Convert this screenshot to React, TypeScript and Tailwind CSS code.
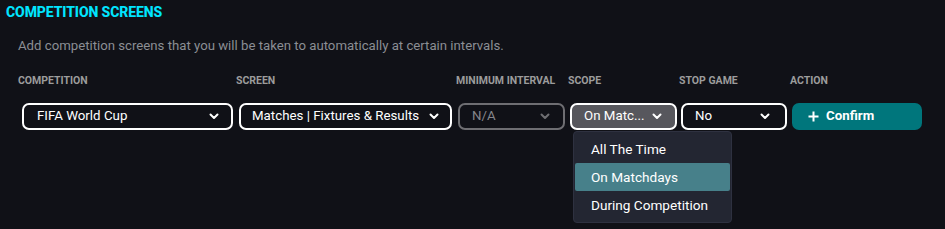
import React from "react";

const Chevron = ({ color = "#ffffff" }: { color?: string }) => (
  <svg width="10" height="7" viewBox="0 0 10 7" fill="none">
    <path d="M1.5 1.5 L5 5 L8.5 1.5" stroke={color} strokeWidth="2" strokeLinecap="round" strokeLinejoin="round" />
  </svg>
);

export default function App() {
  return (
    <div
      className="w-[945px] h-[229px] bg-[#101117] text-white relative overflow-hidden"
      style={{ fontFamily: "Roboto, 'Liberation Sans', sans-serif" }}
    >
      <div className="pt-[5px] pl-[6px]">
        <h1 className="text-[14px] leading-[14px] font-extrabold text-[#00e5ff] tracking-[-0.1px]">COMPETITION SCREENS</h1>
      </div>
      <p className="mt-[19px] pl-[18px] text-[13.2px] leading-[16px] text-[#8b8e94]">
        Add competition screens that you will be taken to automatically at certain intervals.
      </p>

      <div className="mt-[21px] flex pl-[18px] text-[10.5px] leading-[12px] font-bold text-[#9c9c9c]">
        <div className="w-[218px]">COMPETITION</div>
        <div className="w-[220px]">SCREEN</div>
        <div className="w-[112px] whitespace-nowrap">MINIMUM INTERVAL</div>
        <div className="w-[111px]">SCOPE</div>
        <div className="w-[111px]">STOP GAME</div>
        <div>ACTION</div>
      </div>

      <div className="mt-[16px] flex pl-[22px] text-[13.3px]">
        <div className="w-[211px] h-[27px] border-2 border-white rounded-[7px] flex items-center justify-between pl-[13px] pr-[12px]">
          <span className="-mt-px">FIFA World Cup</span>
          <Chevron />
        </div>
        <div className="ml-[6px] w-[213px] h-[27px] border-2 border-white rounded-[7px] flex items-center justify-between pl-[11px] pr-[11px]">
          <span className="-mt-px whitespace-nowrap">Matches | Fixtures &amp; Results</span>
          <Chevron />
        </div>
        <div className="ml-[6px] w-[107px] h-[27px] border-2 border-[#6e6e72] rounded-[7px] flex items-center justify-between pl-[12px] pr-[13px] text-[#85868c]">
          <span className="-mt-px">N/A</span>
          <Chevron color="#6e6e72" />
        </div>
        <div className="relative ml-[5px] w-[107px] h-[27px] border-2 border-white bg-[#57575d] rounded-[7px] flex items-center pl-[12px]">
          <span className="-mt-px">On Matc...</span>
          <span className="ml-[8px] flex"><Chevron /></span>
          <div className="absolute left-[1px] top-[26px] w-[159px] bg-[#232632] border border-[#2e3140] rounded-[4px] py-[3px] px-px text-[13.6px] z-10">
            <div className="h-[28px] flex items-center pl-[16px]">All The Time</div>
            <div className="h-[28px] flex items-center pl-[16px] bg-[#47808a] rounded-[2px]">On Matchdays</div>
            <div className="h-[28px] flex items-center pl-[16px]">During Competition</div>
          </div>
        </div>
        <div className="ml-[4px] w-[106px] h-[27px] border-2 border-white rounded-[7px] flex items-center justify-between pl-[12px] pr-[15px]">
          <span className="-mt-px">No</span>
          <Chevron />
        </div>
        <button className="ml-[5px] w-[130px] h-[27px] bg-[#00767c] rounded-[7px] flex items-center pl-[16px] font-bold text-[13.3px]">
          <svg width="11" height="11" viewBox="0 0 11 11">
            <path d="M5.5 0.5 V10.5 M0.5 5.5 H10.5" stroke="#fff" strokeWidth="2" />
          </svg>
          <span className="ml-[7px] -mt-px">Confirm</span>
        </button>
      </div>
    </div>
  );
}
